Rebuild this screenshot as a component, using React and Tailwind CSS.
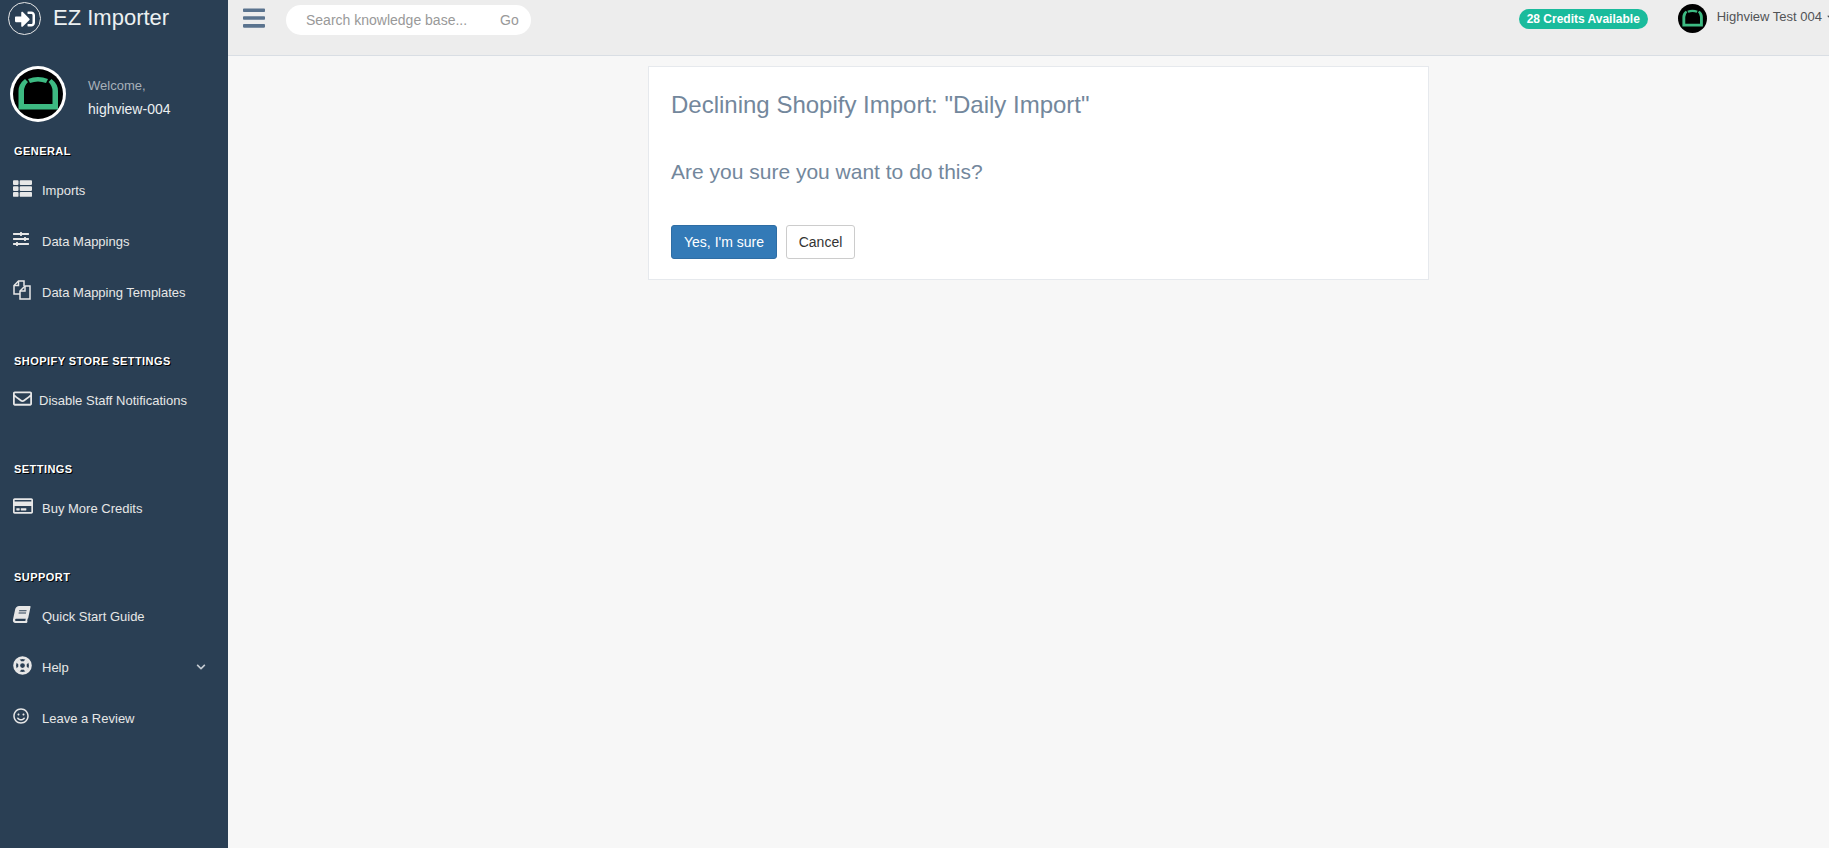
import React from 'react'
import { FaSignInAlt, FaThList, FaSlidersH, FaRegEnvelope, FaRegCreditCard, FaBook, FaRegSmile, FaChevronDown, FaBars, FaAngleDown } from 'react-icons/fa'

function Avatar({ className, ring }) {
  return (
    <svg viewBox="0 0 56 56" className={className}>
      <circle cx="28" cy="28" r="28" fill={ring ? '#fff' : '#000'} />
      <circle cx="28" cy="28" r="25" fill="#000" />
      <path d="M8.500 25 Q8.500 18 15 13 L18 16 Q14 20 14 25 V38 H42.500 V25 Q42.500 20 38.500 16 L41.500 13 Q48 18 48 25 V43.500 H8.500 Z" fill="#3dba82" />
      <path d="M18 13 Q28 9 38 13 L36 17 Q28 14 20 17 Z" fill="#3dba82" />
    </svg>
  )
}

function FilesIcon({ className }) {
  return (
    <svg viewBox="0 0 18 20" fill="none" stroke="currentColor" strokeWidth="1.5" className={className}>
      <path d="M11 6 V1 H5.500 L1 5.500 V14 H7" />
      <path d="M5.500 1 V5.500 H1" />
      <path d="M12 6 H17 V19 H7 V11 Z" />
      <path d="M12 6 V11 H7" />
    </svg>
  )
}

function LifeRingIcon({ className }) {
  return (
    <svg viewBox="0 0 20 20" fill="none" stroke="currentColor" className={className}>
      <circle cx="10" cy="10" r="8.300" strokeWidth="3" />
      <circle cx="10" cy="10" r="3.500" strokeWidth="2" />
      <path d="M5 5 L7.500 7.500 M15 5 L12.500 7.500 M5 15 L7.500 12.500 M15 15 L12.500 12.500" strokeWidth="4.500" />
    </svg>
  )
}

function SectionLabel({ children }) {
  return (
    <h3 className="h-[26px] mt-[31px] first:mt-0 pl-[14px] flex items-center text-[11px] font-bold uppercase tracking-[0.45px] text-white [text-shadow:1px_1px_#000]">
      {children}
    </h3>
  )
}

function MenuItem({ icon: Icon, label, iconClass, textClass, chevron }) {
  return (
    <a className="h-[51px] pl-[13px] pr-[22px] flex items-center text-[13px] text-[#e7e7e7]">
      <Icon className={'mb-[3px] ' + (iconClass || 'w-[19px] h-[19px]')} />
      <span className={'mt-[2px] ' + (textClass || 'ml-[10px]')}>{label}</span>
      {chevron && <FaChevronDown className="ml-auto w-[10px] h-[10px] text-[#c4cbd2]" />}
    </a>
  )
}

export default function App() {
  return (
    <div className="flex h-screen overflow-hidden bg-[#f7f7f7] font-['Liberation_Sans',Arial,sans-serif]">

      <aside className="w-[228px] shrink-0 bg-[#2a3f54] flex flex-col">
        <div className="h-[38px] pl-[8px] pt-[2px] flex items-start">
          <div className="w-[33px] h-[33px] rounded-full border border-[#e7e7e7] flex items-center justify-center text-white">
            <FaSignInAlt className="w-[20px] h-[20px]" />
          </div>
          <span className="ml-[12px] text-[22px] leading-[32px] text-[#ecf0f1]">EZ Importer</span>
        </div>

        <div className="h-[100px] pl-[10px] pt-[28px] flex items-start">
          <Avatar ring className="w-[56px] h-[56px]" />
          <div className="ml-[22px] pt-[11px] text-[13px]">
            <div className="leading-[18px] text-[#a7b0b9]">Welcome,</div>
            <div className="mt-[5px] leading-[18px] text-[14px] text-[#ecf0f1]">highview-004</div>
          </div>
        </div>

        <nav className="flex flex-col">
          <SectionLabel>General</SectionLabel>
          <MenuItem icon={FaThList} label="Imports" />
          <MenuItem icon={FaSlidersH} label="Data Mappings" iconClass="w-[16px] h-[16px] mr-[3px]" />
          <MenuItem icon={FilesIcon} label="Data Mapping Templates" iconClass="w-[18px] h-[20px] mr-[1px]" />

          <SectionLabel>Shopify Store Settings</SectionLabel>
          <MenuItem icon={FaRegEnvelope} label="Disable Staff Notifications" textClass="ml-[7px]" />

          <SectionLabel>Settings</SectionLabel>
          <MenuItem icon={FaRegCreditCard} label="Buy More Credits" iconClass="w-[20px] h-[20px] mr-[-1px]" />

          <SectionLabel>Support</SectionLabel>
          <MenuItem icon={FaBook} label="Quick Start Guide" iconClass="w-[17px] h-[17px] mr-[2px] -skew-x-12" />
          <MenuItem icon={LifeRingIcon} label="Help" chevron iconClass="w-[19px] h-[19px]" />
          <MenuItem icon={FaRegSmile} label="Leave a Review" iconClass="w-[16px] h-[16px] mr-[3px]" />
        </nav>
      </aside>

      <div className="flex-1 min-w-0 flex flex-col">
        <header className="h-[56px] shrink-0 bg-[#ededed] border-b border-[#d9dee4] flex items-start">
          <FaBars className="ml-[15px] mt-[5px] w-[22px] h-[26px] text-[#5a738e]" />
          <div className="ml-[21px] mt-[5px] w-[245px] h-[30px] rounded-full bg-white flex items-center pl-[20px] text-[14px] text-[#999]">
            <span>Search knowledge base...</span>
            <span className="ml-[33px]">Go</span>
          </div>
          <div className="ml-auto -mr-[5px] flex items-start whitespace-nowrap">
            <span className="mt-[9px] h-[20px] w-[129px] rounded-full bg-[#1abb9c] text-center text-[12px] leading-[20px] font-bold text-white">28 Credits Available</span>
            <Avatar className="ml-[30px] mt-[4px] w-[29px] h-[29px]" />
            <span className="ml-[10px] mt-[8px] text-[13px] leading-[18px] text-[#515356]">Highview Test 004</span>
            <FaAngleDown className="ml-[4px] mt-[13px] w-[8px] h-[8px] text-[#515356]" />
          </div>
        </header>

        <main className="pt-[10px] pl-[420px]">
          <div className="w-[781px] h-[214px] bg-white border border-[#e6e9ed] px-[22px] pt-[20px] text-[#73879c]">
            <h3 className="text-[24px] leading-[36px]">Declining Shopify Import: "Daily Import"</h3>
            <p className="mt-[31px] text-[21px] leading-[36px]">Are you sure you want to do this?</p>
            <div className="mt-[35px] flex gap-[9px] text-[14px]">
              <button className="h-[34px] w-[106px] rounded-[3px] bg-[#337ab7] border border-[#2e6da4] text-white">Yes, I'm sure</button>
              <button className="h-[34px] w-[69px] rounded-[3px] bg-white border border-[#ccc] text-[#333]">Cancel</button>
            </div>
          </div>
        </main>
      </div>
    </div>
  )
}
